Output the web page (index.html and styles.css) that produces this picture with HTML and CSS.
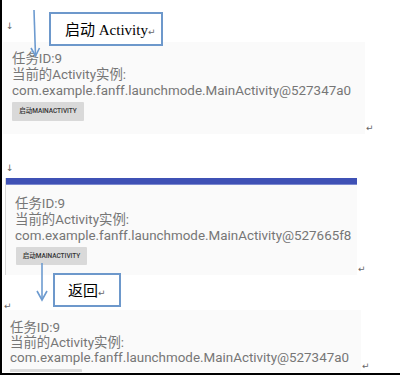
FILE: index.html
```html
<!DOCTYPE html>
<html lang="zh">
  <head>
    <meta charset="UTF-8" />
    <title>launchMode standard</title>
    <link rel="stylesheet" href="styles.css">
  </head>
  <body>
    <div class="page">
      <div class="para para-top"><span class="mark">↓</span></div>

      <div class="shot-row">
        <div class="shot shot-one">
          <p>任务ID:9</p>
          <p>当前的Activity实例:</p>
          <p>com.example.fanff.launchmode.MainActivity@527347a0</p>
          <span class="btn">启动MainActivity</span>
        </div>
        <span class="mark mark-end">↵</span>
      </div>

      <div class="para para-mid"><span class="mark">↓</span></div>

      <div class="shot-row">
        <div class="shot shot-two">
          <div class="toolbar"></div>
          <div class="shot-body">
            <p>任务ID:9</p>
            <p>当前的Activity实例:</p>
            <p>com.example.fanff.launchmode.MainActivity@527665f8</p>
            <span class="btn">启动MainActivity</span>
          </div>
        </div>
        <span class="mark mark-end">↵</span>
      </div>

      <div class="para para-back"><span class="mark">↵</span></div>

      <div class="shot-row">
        <div class="shot shot-three">
          <p>任务ID:9</p>
          <p>当前的Activity实例:</p>
          <p>com.example.fanff.launchmode.MainActivity@527347a0</p>
          <span class="btn"></span>
        </div>
        <span class="mark mark-end">↵</span>
      </div>

      <!-- callouts drawn over the screenshots -->
      <div class="callout callout-start">启动 Activity<span class="mark">↵</span></div>
      <div class="callout callout-back">返回<span class="mark">↵</span></div>

      <svg class="arrow arrow-start" width="14" height="50" viewBox="0 0 14 50">
        <path d="M6 1 L7.5 47" />
        <path d="M3 39 L7.5 47 L11.5 39" />
      </svg>
      <svg class="arrow arrow-back" width="14" height="40" viewBox="0 0 14 40">
        <path d="M7 0 L7 37" />
        <path d="M2 28 L7 37 L12 28" />
      </svg>
    </div>
  </body>
</html>
```

FILE: styles.css
```css
* {
  margin: 0;
  padding: 0;
  box-sizing: border-box;
}

body {
  background-color: #fff;
  font-family: Roboto, "Noto Sans CJK SC", sans-serif;
}

.page {
  position: relative;
  width: 400px;
  height: 375px;
  overflow: hidden;
  border-left: 2px solid #000;
  border-bottom: 2px solid #000;
  background-color: #fff;
}

/* word processor marks */
.mark {
  font-family: "DejaVu Sans", sans-serif;
  font-size: 9px;
  line-height: 1;
  color: #666;
}

.para {
  padding-left: 4px;
}

.para-top {
  height: 42px;
  padding-top: 14px;
}

.para-mid {
  height: 44px;
  padding-top: 22px;
}

.para-back {
  height: 35px;
  padding-top: 19px;
  padding-left: 2px;
}

.shot-row {
  display: flex;
  align-items: flex-end;
}

.mark-end {
  margin-left: 1px;
  margin-bottom: 1px;
}

/* app screenshots */
.shot {
  margin-left: 1px;
  background-color: #fafafa;
  color: #767676;
  font-size: 13.4px;
  line-height: 16px;
}

.shot p {
  white-space: nowrap;
}

.shot-one {
  width: 362px;
  height: 92px;
  padding: 9px 0 0 9px;
}

.shot-two {
  width: 352px;
  height: 97px;
  margin-left: 3px;
  border-left: 1px solid #d8d8d8;
}

.toolbar {
  height: 7px;
  background-color: #3f51b5;
  border-bottom: 1px solid #7c89cf;
}

.shot-body {
  padding: 11px 0 0 9px;
}

.shot-three {
  width: 358px;
  height: 62px;
  padding: 10px 0 0 7px;
  line-height: 15px;
  overflow: hidden;
}

.btn {
  display: block;
  width: 72px;
  height: 19px;
  margin-top: 3px;
  background-color: #d9d9d9;
  color: #333;
  font-size: 6.5px;
  font-weight: 500;
  line-height: 19px;
  text-align: center;
  text-transform: uppercase;
  border-radius: 1px;
}

.shot-body .btn {
  width: 71px;
  height: 18px;
  line-height: 18px;
  margin-left: 1px;
}

.shot-three .btn {
  margin-top: 4px;
}

/* callouts and arrows */
.callout {
  position: absolute;
  border: 2px solid #6d98cb;
  background-color: #fff;
  color: #000;
  font-family: "Liberation Serif", "Noto Sans CJK SC", serif;
  font-size: 15px;
  line-height: 20px;
}

.callout-start {
  left: 47px;
  top: 12px;
  width: 114px;
  height: 34px;
  padding: 6px 0 0 14px;
}

.callout-back {
  left: 51px;
  top: 273px;
  width: 68px;
  height: 34px;
  padding: 6px 0 0 13px;
}

.arrow {
  position: absolute;
  fill: none;
  stroke: #6d9bd0;
  stroke-width: 1.6;
}

.arrow-start {
  left: 26px;
  top: 9px;
}

.arrow-back {
  left: 33px;
  top: 263px;
}
```
